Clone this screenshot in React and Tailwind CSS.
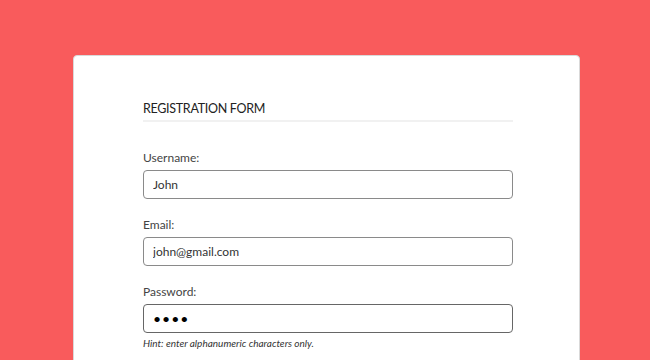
export default function App() {
  return (
    <div className="w-full h-[360px] overflow-hidden bg-[#f95b5c] pt-[55px]" style={{ fontFamily: 'Lato, "Open Sans", sans-serif' }}>
      <div className="w-[507px] ml-[73px] bg-white rounded-[4px] border border-[#d9d9d9] h-[320px] pl-[69px] pr-[66px] pt-[45px]">
        <h2 className="text-[12.5px] tracking-[-0.3px] text-[#222] uppercase pb-[3px] border-b-2 border-[#f1f1f1] leading-[16px]">Registration Form</h2>
        <form className="mt-[28px] flex flex-col">
          <label className="text-[12px] text-[#444] leading-[16px]">Username:</label>
          <input className="mt-[4px] h-[29px] w-full rounded-[4px] border border-[#8a8a8a] px-[9px] text-[12px] text-[#333] outline-none" defaultValue="John" />
          <label className="mt-[18px] text-[12px] text-[#444] leading-[16px]">Email:</label>
          <input className="mt-[4px] h-[29px] w-full rounded-[4px] border border-[#8a8a8a] px-[9px] text-[12px] text-[#333] outline-none" defaultValue="john@gmail.com" />
          <label className="mt-[18px] text-[12px] text-[#444] leading-[16px]">Password:</label>
          <input type="password" className="mt-[4px] h-[29px] w-full rounded-[4px] border border-[#666] px-[9px] text-[14px] text-black outline-none tracking-[1px]" defaultValue="abcd" />
          <p className="mt-[4px] text-[10px] italic text-[#333] leading-[13px]">Hint: enter alphanumeric characters only.</p>
        </form>
      </div>
    </div>
  );
}
